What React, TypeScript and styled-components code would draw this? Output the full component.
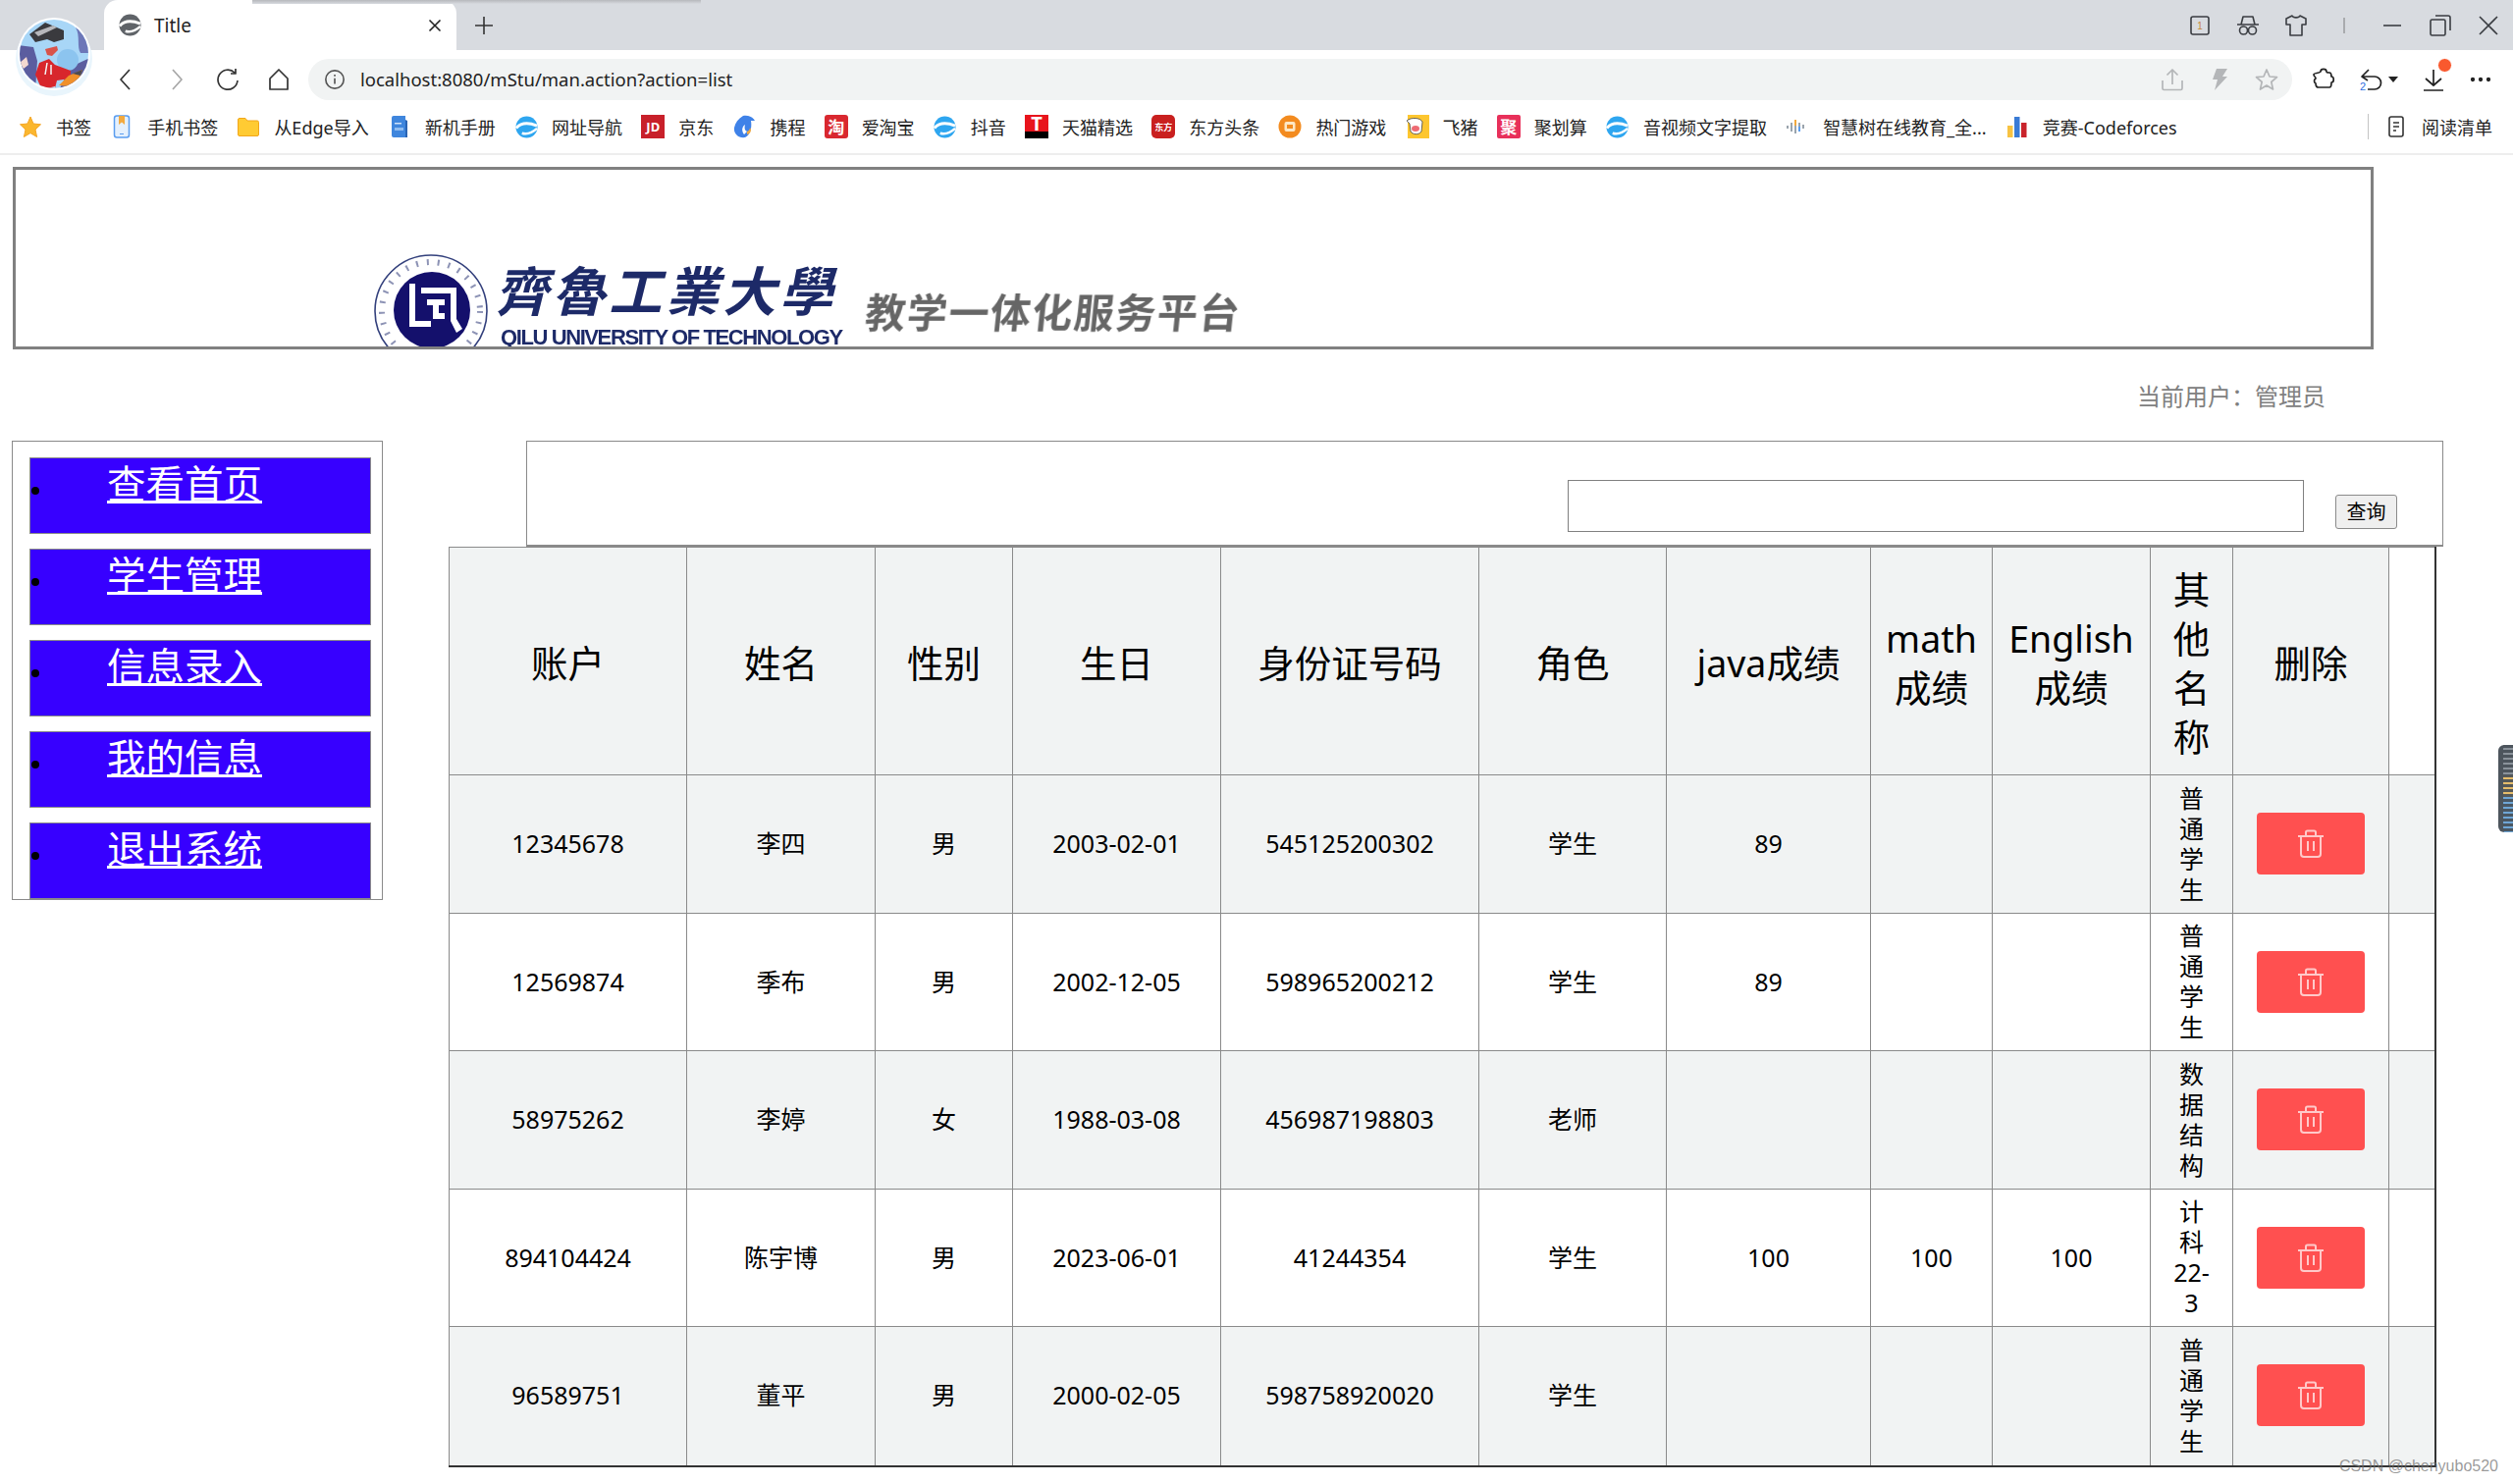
import React from "react";
import styled, { createGlobalStyle } from "styled-components";

const FONT = `"Noto Sans", "Noto Sans CJK SC", sans-serif`;

const GlobalStyle = createGlobalStyle`
    html, body {
        margin: 0;
        padding: 0;
        background: #fff;
    }
    body {
        font-family: ${FONT};
        color: #000;
    }
    * {
        box-sizing: border-box;
    }
`;

function Avatar() {
    return (
        <AvatarSvg viewBox="0 0 100 95">
            <defs>
                <clipPath id="avatarClip">
                    <circle cx="45" cy="45" r="35" />
                </clipPath>
            </defs>
            <ellipse cx="45" cy="50" rx="39" ry="38" fill="#e9f5fc" />
            <circle cx="45" cy="45" r="37" fill="#fff" />
            <g clipPath="url(#avatarClip)">
                <rect x="5" y="5" width="80" height="80" fill="#a8d6f7" />
                <path d="M8 36 L24 38 L28 52 L26 82 L8 82Z" fill="#5b5d9f" />
                <path d="M67 18 C72 26 68 38 72 44 L84 44 L84 20Z" fill="#6d77b8" />
                <path d="M62 58 L84 48 L84 82 L50 82Z" fill="#5b5d9f" />
                <circle cx="59" cy="51" r="11" fill="#8cc4ef" />
                <path d="M20 25 L36 13 L55 21 L55 30 L45 33 L38 30 L26 33Z" fill="#3a3a3e" />
                <path d="M25 23 L44 16 L48 18 L29 27Z" fill="#b7b7bb" />
                <path d="M36 40 L48 37 L49 41 L43 47 L38 46Z" fill="#d9534a" />
                <path d="M30 54 L40 50 L46 56 L62 62 L62 70 L48 72 L46 80 L32 80 L26 66Z" fill="#d8262c" />
                <path d="M38 54 L36 66 M42 56 L42 66" stroke="#f5f5f5" strokeWidth="1.5" fill="none" />
                <path d="M50 77 L60 67 L74 61 L71 70 L60 78Z" fill="#f0902a" />
                <path d="M64 65 L74 61 L72 67Z" fill="#4b4b52" />
                <path d="M38 80 L46 78 L48 85 L36 85Z" fill="#cfe6f7" />
                <path d="M10 54 L17 48 L19 56 L14 60Z" fill="#f4d8d0" />
            </g>
        </AvatarSvg>
    );
}

function TitleBarBar() {
    return (
        <TitleBar>
            <TabShadow />
            <Tab>
                <EdgeMark size={23} color="#5f6368" />
                <TabTitle>Title</TabTitle>
                <TabClose viewBox="0 0 14 14">
                    <path d="M1.5 1.5 L12.5 12.5 M12.5 1.5 L1.5 12.5" />
                </TabClose>
            </Tab>
            <PlusIcon viewBox="0 0 20 20">
                <path d="M10 1 V19 M1 10 H19" />
            </PlusIcon>
            <WindowControls>
                <ChromeIcon viewBox="0 0 24 24">
                    <rect x="3" y="3" width="18" height="18" rx="2" />
                    <text x="12" y="16" textAnchor="middle" fontSize="10" fill="#c98a3a" stroke="none" fontFamily="Liberation Sans">
                        1
                    </text>
                </ChromeIcon>
                <ChromeIcon viewBox="0 0 24 24">
                    <path d="M1 11 H23 M5 11 L7 3 H17 L19 11" />
                    <circle cx="7.5" cy="17" r="4" />
                    <circle cx="16.5" cy="17" r="4" />
                    <path d="M11.5 16.5 H12.5" />
                </ChromeIcon>
                <ChromeIcon viewBox="0 0 24 24">
                    <path d="M8 2 C9 4.5 15 4.5 16 2 L22 5 L22 11 L18 11 L18 22 L6 22 L6 11 L2 11 L2 5Z" />
                </ChromeIcon>
                <WindowSep />
                <ChromeIcon viewBox="0 0 24 24">
                    <path d="M3 12 H21" />
                </ChromeIcon>
                <ChromeIcon viewBox="0 0 24 24">
                    <rect x="2" y="6" width="15" height="16" rx="1.5" />
                    <path d="M7 2 H20 a2 2 0 0 1 2 2 V17" />
                </ChromeIcon>
                <ChromeIcon viewBox="0 0 24 24">
                    <path d="M3 3 L21 21 M21 3 L3 21" />
                </ChromeIcon>
            </WindowControls>
        </TitleBar>
    );
}

function EdgeMark({ size, color }: { size: number; color: string }) {
    return (
        <svg width={size} height={size} viewBox="0 0 24 24">
            <circle cx="12" cy="12" r="11.5" fill={color} />
            <path d="M1 13 C6 7 14 7 23 10.5" stroke="#fff" strokeWidth="3" fill="none" />
            <path d="M7 18.5 C12 20 18 18 23 13.5" stroke="#fff" strokeWidth="2.6" fill="none" />
        </svg>
    );
}

function AddressToolbar() {
    return (
        <Toolbar>
            <NavGroup>
                <NavIcon viewBox="0 0 24 24">
                    <path d="M16 2 L7 12 L16 22" />
                </NavIcon>
                <NavIcon viewBox="0 0 24 24" $muted>
                    <path d="M8 2 L17 12 L8 22" />
                </NavIcon>
                <NavIcon viewBox="0 0 24 24">
                    <path d="M19 5 A10 10 0 1 0 22 13 M20 1 V6 H15" />
                </NavIcon>
                <NavIcon viewBox="0 0 24 24">
                    <path d="M12 2 L21 11 V22 H3 V11Z" />
                </NavIcon>
            </NavGroup>
            <AddressBar>
                <InfoIcon viewBox="0 0 24 24">
                    <circle cx="12" cy="12" r="10" />
                    <path d="M12 10.5 V17 M12 6.5 V8.5" />
                </InfoIcon>
                <Url>localhost:8080/mStu/man.action?action=list</Url>
                <AddressActions>
                    <AddressIcon viewBox="0 0 24 24">
                        <path d="M2 13 V21 a1.5 1.5 0 0 0 1.5 1.5 H20.5 A1.5 1.5 0 0 0 22 21 V13 M12 17 V2 M6.5 7.5 L12 2 L17.5 7.5" />
                    </AddressIcon>
                    <AddressIcon viewBox="0 0 24 24">
                        <path d="M9 1 H20 L15 9 H20 L7 23 L10 12 H5Z" fill="#b4b6b8" stroke="none" />
                    </AddressIcon>
                    <AddressIcon viewBox="0 0 24 24">
                        <path d="M12 2 L15 9 L22.5 9.6 L16.8 14.5 L18.5 22 L12 18 L5.5 22 L7.2 14.5 L1.5 9.6 L9 9Z" />
                    </AddressIcon>
                </AddressActions>
            </AddressBar>
            <ToolActions>
                <ToolIcon viewBox="0 0 24 24">
                    <path d="M9 4 C9 0.5 15 0.5 15 4 C15 5 17 5 18 5 C20 5 20 8 20 9 C23 9 23 15 20 15 C20 17 20 20 18 20 L7 20 C5 20 4 19 4 16 C2 15 2 12 4 11 C4 9 2 9 2 7 C2 5 7 6 9 4Z" />
                </ToolIcon>
                <UndoWrap>
                    <ToolIcon viewBox="0 0 24 24">
                        <path d="M10 2 L3 9 L9 13 M3.5 9 H16 a6 6 0 0 1 0 13 H9" />
                        <text x="1" y="23" fontSize="11" fill="#2f6fe0" stroke="none" fontFamily="Liberation Sans">
                            2
                        </text>
                    </ToolIcon>
                    <Caret />
                </UndoWrap>
                <DownloadWrap>
                    <ToolIcon viewBox="0 0 24 24">
                        <path d="M12 2 V18 M4 11 L12 18 L20 11 M2 23 H22" />
                    </ToolIcon>
                    <RedDot />
                </DownloadWrap>
                <ToolIcon viewBox="0 0 24 24">
                    <circle cx="4" cy="12" r="1.3" fill="#333" />
                    <circle cx="12" cy="12" r="1.3" fill="#333" />
                    <circle cx="20" cy="12" r="1.3" fill="#333" />
                </ToolIcon>
            </ToolActions>
        </Toolbar>
    );
}

// inside a function: the badges below are styled components declared further down
function getBookmarks(): { icon: React.ReactNode; label: string }[] {
    return [
        {
            icon: (
                <svg width="24" height="24" viewBox="0 0 24 24">
                    <path d="M12 2 L15 9 L22.5 9.8 L17 15 L18.6 22.5 L12 18.6 L5.4 22.5 L7 15 L1.5 9.8 L9 9Z" fill="#fbb72e" stroke="#f5a524" strokeLinejoin="round" />
                </svg>
            ),
            label: "书签",
        },
        {
            icon: (
                <svg width="24" height="24" viewBox="0 0 24 24">
                    <rect x="4.5" y="1" width="15" height="22" rx="2.5" fill="#e4f0fd" stroke="#5a9def" strokeWidth="1.5" />
                    <path d="M9 1 H15 V10 L12 7.5 L9 10Z" fill="#f3a93d" />
                    <rect x="10" y="19" width="4" height="1" fill="#5a9def" />
                </svg>
            ),
            label: "手机书签",
        },
        {
            icon: (
                <svg width="24" height="24" viewBox="0 0 24 24">
                    <path d="M1.5 5 a1.5 1.5 0 0 1 1.5 -1.5 H9 L11 6 H21 a1.5 1.5 0 0 1 1.5 1.5 V20 a1.5 1.5 0 0 1 -1.5 1.5 H3 a1.5 1.5 0 0 1 -1.5 -1.5Z" fill="#ffcb33" stroke="#f2a71b" />
                </svg>
            ),
            label: "从Edge导入",
        },
        {
            icon: (
                <svg width="24" height="24" viewBox="0 0 24 24">
                    <path d="M4 3 a2 2 0 0 1 2 -2 H18 V23 H6 a2 2 0 0 1 -2 -2Z" fill="#3f86dd" />
                    <path d="M18 5 L20 6 V23 H18Z" fill="#2a64b4" />
                    <rect x="7" y="8" width="7" height="1.5" fill="#cfe2f9" />
                    <rect x="7" y="13" width="9" height="3" fill="#8fbcf0" />
                </svg>
            ),
            label: "新机手册",
        },
        { icon: <EdgeMark size={23} color="#2ea6f0" />, label: "网址导航" },
        { icon: <Badge $bg="#c8202a" $size={13}>JD</Badge>, label: "京东" },
        {
            icon: (
                <svg width="24" height="24" viewBox="0 0 24 24">
                    <path d="M11 1 C16 0 21 2 23 6 L19 6 C20 12 19 20 13 23 C6 24 1 19 2 13 C3 8 6 4 11 1Z" fill="#3f82e8" />
                    <path d="M12 20 C9 16 10 12 13 10 C12 14 13 16 15 17" fill="#fff" />
                    <path d="M15 17 C17 16 18 15 18 13 L19 15 C19 18 17 20 15 20Z" fill="#f3a93d" />
                </svg>
            ),
            label: "携程",
        },
        { icon: <Badge $bg="#d9282f" $size={17} $radius={3}>淘</Badge>, label: "爱淘宝" },
        { icon: <EdgeMark size={23} color="#2ea6f0" />, label: "抖音" },
        { icon: <Badge $bg="linear-gradient(#e8141c 0 72%, #000 72%)" $size={20} $align="start">T</Badge>, label: "天猫精选" },
        { icon: <Badge $bg="#c9201f" $size={9} $radius={5}>东方</Badge>, label: "东方头条" },
        {
            icon: (
                <svg width="24" height="24" viewBox="0 0 24 24">
                    <circle cx="12" cy="12" r="11.5" fill="#f38b1f" />
                    <rect x="6.5" y="7" width="11" height="10" rx="2" fill="#fde7c4" />
                    <rect x="9" y="10" width="6" height="4" fill="#f38b1f" />
                </svg>
            ),
            label: "热门游戏",
        },
        {
            icon: (
                <svg width="24" height="24" viewBox="0 0 24 24">
                    <rect x="2" y="0" width="22" height="24" fill="#fdc62f" />
                    <path d="M1 6 C6 2 15 3 17 7 L16 17 C13 21 7 20 5 17 L4 9Z" fill="#fff" stroke="#444" strokeWidth="0.8" />
                    <ellipse cx="10" cy="14" rx="4" ry="3" fill="#ee6b73" />
                </svg>
            ),
            label: "飞猪",
        },
        { icon: <Badge $bg="#e8305a" $size={17} $radius={2}>聚</Badge>, label: "聚划算" },
        { icon: <EdgeMark size={23} color="#2ea6f0" />, label: "音视频文字提取" },
        {
            icon: (
                <svg width="24" height="24" viewBox="0 0 24 24">
                    <path d="M2 11 V14 M6 8 V17 M10 5 V19 M14 8 V17 M18 10 V14" strokeWidth="2" fill="none" stroke="#9aa4ad" />
                    <path d="M10 5 V11" stroke="#f3a93d" strokeWidth="2" />
                    <path d="M14 12 V17" stroke="#5a9def" strokeWidth="2" />
                </svg>
            ),
            label: "智慧树在线教育_全...",
        },
        {
            icon: (
                <svg width="24" height="24" viewBox="0 0 24 24">
                    <rect x="2" y="11" width="5.5" height="12" fill="#f7c242" />
                    <rect x="9" y="2" width="5.5" height="21" fill="#3a7bd5" />
                    <rect x="16" y="8" width="5.5" height="15" fill="#c9242b" />
                </svg>
            ),
            label: "竞赛-Codeforces",
        },
    ];
}

function BookmarksBar() {
    return (
        <Bookmarks>
            {getBookmarks().map((b) => (
                <Bookmark key={b.label}>
                    <BookmarkIcon>{b.icon}</BookmarkIcon>
                    {b.label}
                </Bookmark>
            ))}
            <ReadingList>
                <svg width="24" height="24" viewBox="0 0 24 24" fill="none" stroke="#333" strokeWidth="1.6">
                    <rect x="5" y="2" width="14" height="20" rx="2" />
                    <path d="M9 8 H15 M9 12 H15 M9 16 H12" />
                </svg>
                阅读清单
            </ReadingList>
        </Bookmarks>
    );
}

function Seal() {
    return (
        <SealSvg viewBox="0 0 116 116">
            <circle cx="58" cy="58" r="57" fill="#fff" stroke="#33407c" strokeWidth="1.6" />
            <circle cx="58" cy="58" r="50" fill="none" stroke="#8d93b5" strokeWidth="6" strokeDasharray="2 9" />
            <circle cx="59" cy="57" r="39" fill="#14106c" />
            <path
                d="M36 30 H42 V68 H58 V74 H36Z M48 34 H84 V66 L90 76 L84 80 L78 68 V40 H48Z M54 46 H72 V52 H66 V60 H72 V66 H60 V52 H54Z"
                fill="#fff"
            />
        </SealSvg>
    );
}

const menu = ["查看首页", "学生管理", "信息录入", "我的信息", "退出系统"];

const headers = ["账户", "姓名", "性别", "生日", "身份证号码", "角色", "java成绩", "math成绩", "English成绩", "其他名称", "删除"];

const widths = [242, 192, 140, 212, 263, 191, 208, 124, 161, 84, 159, 47];

const rows = [
    { h: 141, cells: ["12345678", "李四", "男", "2003-02-01", "545125200302", "学生", "89", "", "", "普通学生"] },
    { h: 140, cells: ["12569874", "季布", "男", "2002-12-05", "598965200212", "学生", "89", "", "", "普通学生"] },
    { h: 141, cells: ["58975262", "李婷", "女", "1988-03-08", "456987198803", "老师", "", "", "", "数据结构"] },
    { h: 140, cells: ["894104424", "陈宇博", "男", "2023-06-01", "41244354", "学生", "100", "100", "100", "计科22-3"] },
    { h: 142, cells: ["96589751", "董平", "男", "2000-02-05", "598758920020", "学生", "", "", "", "普通学生"] },
];

function TrashIcon() {
    return (
        <svg width="28" height="29" viewBox="0 0 28 29" fill="none" stroke="#ffc9c9" strokeWidth="2">
            <path d="M1 7 H27" />
            <path d="M9 7 V3 a1.5 1.5 0 0 1 1.5 -1.5 H17.5 A1.5 1.5 0 0 1 19 3 V7" />
            <path d="M4 7 V25 a3 3 0 0 0 3 3 H21 a3 3 0 0 0 3 -3 V7" />
            <path d="M11 12 V22 M17 12 V22" />
        </svg>
    );
}

function App() {
    return (
        <Screen>
            <GlobalStyle />
            <TitleBarBar />
            <AddressToolbar />
            <BookmarksBar />
            <Avatar />
            <Page>
                <Banner>
                    <Seal />
                    <UniversityName>
                        <CalligraphyName>齊魯工業大學</CalligraphyName>
                        <EnglishName>QILU UNIVERSITY OF TECHNOLOGY</EnglishName>
                    </UniversityName>
                    <Slogan>教学一体化服务平台</Slogan>
                </Banner>
                <UserRow>当前用户：管理员</UserRow>
                <Main>
                    <Sidebar>
                        {menu.map((m) => (
                            <MenuItem key={m}>
                                <MenuLink href="#">{m}</MenuLink>
                            </MenuItem>
                        ))}
                    </Sidebar>
                    <Content>
                        <SearchPanel>
                            <SearchInput />
                            <SearchButton>查询</SearchButton>
                        </SearchPanel>
                        <Table>
                            <colgroup>
                                {widths.map((w, i) => (
                                    <Col key={i} $w={w} />
                                ))}
                            </colgroup>
                            <thead>
                                <tr>
                                    {headers.map((h) => (
                                        <Th key={h}>{h}</Th>
                                    ))}
                                </tr>
                            </thead>
                            <tbody>
                                {rows.map((r) => (
                                    <Row key={r.cells[0]} $h={r.h}>
                                        {r.cells.map((c, i) => (
                                            <Td key={i} $narrow={i === 9}>
                                                {c}
                                            </Td>
                                        ))}
                                        <Td>
                                            <DeleteButton>
                                                <TrashIcon />
                                            </DeleteButton>
                                        </Td>
                                        <Td />
                                    </Row>
                                ))}
                            </tbody>
                        </Table>
                    </Content>
                </Main>
            </Page>
            <SideHandle />
            <Watermark>CSDN @chenyubo520</Watermark>
        </Screen>
    );
}

const Screen = styled.div`
    position: relative;
    width: 2560px;
    height: 1512px;
    overflow: hidden;
    background: #fff;
`;

const AvatarSvg = styled.svg`
    position: absolute;
    left: 10px;
    top: 10px;
    width: 100px;
    height: 95px;
`;

const TitleBar = styled.div`
    position: relative;
    display: flex;
    align-items: center;
    height: 51px;
    padding-left: 106px;
    background: #d8dbe0;
`;

const TabShadow = styled.div`
    position: absolute;
    left: 257px;
    top: 0;
    width: 457px;
    height: 4px;
    background: linear-gradient(#b6b8bc, #d8dbe0);
`;

const Tab = styled.div`
    display: flex;
    align-items: center;
    align-self: stretch;
    width: 359px;
    padding: 0 15px 0 15px;
    background: #fff;
    border-radius: 14px 14px 0 0;
`;

const TabTitle = styled.span`
    margin-left: 13px;
    font-size: 19px;
    color: #222;
`;

const TabClose = styled.svg`
    width: 14px;
    height: 14px;
    margin-left: auto;
    fill: none;
    stroke: #222;
    stroke-width: 1.6;
`;

const PlusIcon = styled.svg`
    width: 20px;
    height: 20px;
    margin-left: 18px;
    fill: none;
    stroke: #333;
    stroke-width: 1.6;
`;

const WindowControls = styled.div`
    display: flex;
    align-items: center;
    gap: 25px;
    margin-left: auto;
    padding-right: 13px;
`;

const ChromeIcon = styled.svg`
    width: 24px;
    height: 24px;
    fill: none;
    stroke: #3a3d42;
    stroke-width: 1.6;
    stroke-linejoin: round;
`;

const WindowSep = styled.div`
    width: 2px;
    height: 16px;
    margin: 0 11px;
    background: #a9abae;
`;

const Toolbar = styled.div`
    display: flex;
    align-items: center;
    height: 59px;
    padding-left: 116px;
    padding-right: 21px;
`;

const NavGroup = styled.div`
    display: flex;
    align-items: center;
    gap: 28px;
`;

const NavIcon = styled.svg<{ $muted?: boolean }>`
    width: 24px;
    height: 24px;
    fill: none;
    stroke: ${(p) => (p.$muted ? "#a6a6a6" : "#333")};
    stroke-width: 1.7;
    stroke-linejoin: round;
`;

const AddressBar = styled.div`
    display: flex;
    align-items: center;
    flex: 1;
    height: 42px;
    margin-left: 18px;
    padding: 0 14px 0 16px;
    background: #f1f3f3;
    border-radius: 21px;
`;

const InfoIcon = styled.svg`
    width: 22px;
    height: 22px;
    fill: none;
    stroke: #555;
    stroke-width: 1.8;
`;

const Url = styled.span`
    margin-left: 15px;
    font-size: 18.5px;
    color: #222;
`;

const AddressActions = styled.div`
    display: flex;
    align-items: center;
    gap: 24px;
    margin-left: auto;
`;

const AddressIcon = styled.svg`
    width: 24px;
    height: 24px;
    fill: none;
    stroke: #b4b6b8;
    stroke-width: 1.7;
    stroke-linejoin: round;
`;

const ToolActions = styled.div`
    display: flex;
    align-items: center;
    gap: 24px;
    margin-left: 20px;
`;

const ToolIcon = styled.svg`
    width: 24px;
    height: 24px;
    fill: none;
    stroke: #222;
    stroke-width: 1.7;
    stroke-linejoin: round;
`;

const UndoWrap = styled.div`
    display: flex;
    align-items: center;
    gap: 6px;
`;

const Caret = styled.div`
    width: 0;
    height: 0;
    border-left: 5px solid transparent;
    border-right: 5px solid transparent;
    border-top: 6px solid #222;
`;

const DownloadWrap = styled.div`
    position: relative;
    display: flex;
`;

const RedDot = styled.div`
    position: absolute;
    right: -7px;
    top: -10px;
    width: 15px;
    height: 15px;
    border: 1px solid #fff;
    border-radius: 50%;
    background: #f9592e;
`;

const Bookmarks = styled.div`
    display: flex;
    align-items: center;
    gap: 19.2px;
    height: 48px;
    padding: 0 21px 8px 19px;
    border-bottom: 2px solid #eeeeee;
`;

const Bookmark = styled.div`
    display: flex;
    align-items: center;
    gap: 14px;
    font-size: 18px;
    color: #222;
    white-space: nowrap;
`;

const BookmarkIcon = styled.span`
    display: flex;
    align-items: center;
    justify-content: center;
    width: 24px;
    height: 24px;
`;

const Badge = styled.span<{ $bg: string; $size: number; $radius?: number; $align?: string }>`
    display: flex;
    align-items: ${(p) => p.$align || "center"};
    justify-content: center;
    width: 24px;
    height: 24px;
    background: ${(p) => p.$bg};
    border-radius: ${(p) => p.$radius || 0}px;
    color: #fff;
    font-size: ${(p) => p.$size}px;
    font-weight: 700;
    line-height: ${(p) => (p.$align ? "18px" : "1")};
    white-space: nowrap;
`;

const ReadingList = styled.div`
    display: flex;
    align-items: center;
    gap: 14px;
    height: 26px;
    margin-left: auto;
    padding-left: 16px;
    border-left: 1px solid #c4c4c4;
    font-size: 18px;
    color: #222;
`;

const Page = styled.div`
    padding: 12px 0 0 12px;
`;

const Banner = styled.div`
    display: flex;
    align-items: flex-end;
    width: 2405px;
    height: 186px;
    margin-left: 1px;
    padding-left: 365px;
    border: 3px solid #808080;
    overflow: hidden;
`;

const SealSvg = styled.svg`
    flex: none;
    width: 116px;
    height: 116px;
    margin-bottom: -22px;
`;

const UniversityName = styled.div`
    display: flex;
    flex-direction: column;
    margin-left: 13px;
    filter: blur(0.5px);
`;

const CalligraphyName = styled.div`
    margin-bottom: 7px;
    font-family: "Noto Sans CJK TC", sans-serif;
    font-size: 54px;
    font-weight: 700;
    line-height: 68px;
    letter-spacing: 4px;
    color: #1d2a68;
    transform: skewX(-14deg);
`;

const EnglishName = styled.div`
    font-family: "Liberation Sans", sans-serif;
    font-size: 22px;
    font-weight: 700;
    line-height: 18px;
    letter-spacing: -1.4px;
    color: #1d2a68;
    white-space: nowrap;
`;

const Slogan = styled.div`
    margin-left: 24px;
    margin-bottom: 11px;
    font-family: "Noto Sans CJK SC", sans-serif;
    font-size: 41px;
    font-weight: 700;
    line-height: 52px;
    letter-spacing: 1.5px;
    color: #666;
    transform: skewX(-6deg);
    filter: blur(0.6px);
`;

const UserRow = styled.div`
    display: flex;
    align-items: center;
    justify-content: flex-end;
    height: 93px;
    padding-right: 191px;
    font-size: 24px;
    color: #808080;
`;

const Main = styled.div`
    display: flex;
    align-items: flex-start;
    gap: 67px;
`;

const Sidebar = styled.ul`
    display: flex;
    flex-direction: column;
    gap: 15px;
    flex: none;
    width: 378px;
    height: 468px;
    margin: 0;
    padding: 16px 11px 0 17px;
    border: 1px solid #8a8a8a;
    list-style: none;
`;

const MenuItem = styled.li`
    display: flex;
    align-items: flex-start;
    flex: none;
    height: 78px;
    border: 1px solid #8a8a8a;
    background: #3700ff;

    &::before {
        content: "";
        flex: none;
        width: 8px;
        height: 8px;
        margin: 29px 0 0 1px;
        border-radius: 50%;
        background: #000;
    }
`;

const MenuLink = styled.a`
    margin-left: 69px;
    font-size: 39.5px;
    line-height: 52px;
    color: #fff;
    text-decoration: underline;
`;

const Content = styled.div`
    display: flex;
    flex-direction: column;
    width: 2032px;
`;

const SearchPanel = styled.div`
    display: flex;
    align-items: flex-start;
    justify-content: flex-end;
    gap: 32px;
    height: 108px;
    margin-left: 79px;
    padding: 39px 46px 0 0;
    border: 1px solid #8a8a8a;
    border-bottom-width: 2px;
`;

const SearchInput = styled.input`
    width: 750px;
    height: 53px;
    border: 1px solid #808080;
    background: #fff;
    outline: none;
`;

const SearchButton = styled.button`
    width: 63px;
    height: 35px;
    margin-top: 15px;
    padding: 0;
    border: 1px solid #8a8a8a;
    border-radius: 3px;
    background: #efefef;
    font-family: ${FONT};
    font-size: 20px;
    line-height: 1;
    color: #000;
`;

const Table = styled.table`
    width: 2023px;
    table-layout: fixed;
    border-collapse: collapse;
    border-left: 1px solid #8a8a8a;
    border-top: 1px solid #8a8a8a;
    border-right: 2px solid #333;
    border-bottom: 2px solid #333;
`;

const Col = styled.col<{ $w: number }>`
    width: ${(p) => p.$w}px;
`;

const Th = styled.th`
    height: 232px;
    padding: 5px 8px 0;
    border: 1px solid #8a8a8a;
    background: #f1f3f3;
    font-size: 37.5px;
    font-weight: 400;
    line-height: 50px;
    text-align: center;
`;

const Row = styled.tr<{ $h: number }>`
    height: ${(p) => p.$h}px;

    &:nth-child(odd) {
        background: #f1f3f3;
    }
`;

const Td = styled.td<{ $narrow?: boolean }>`
    padding: 0 ${(p) => (p.$narrow ? 20 : 8)}px 1px;
    border: 1px solid #8a8a8a;
    font-size: 25px;
    line-height: 31px;
    text-align: center;
    vertical-align: middle;
`;

const DeleteButton = styled.button`
    display: inline-flex;
    align-items: center;
    justify-content: center;
    width: 110px;
    height: 63px;
    padding: 0;
    border: none;
    border-radius: 4px;
    background: #ff5050;
    vertical-align: middle;
`;

const SideHandle = styled.div`
    position: absolute;
    right: 0;
    top: 759px;
    width: 15px;
    height: 89px;
    border-left: 5px solid #4d555d;
    border-radius: 6px 0 0 6px;
    background: repeating-linear-gradient(rgba(70, 78, 86, 0.9) 0 3px, transparent 3px 5px),
        linear-gradient(#8a929a 0 35%, #e6bd6b 35% 60%, #6fa6d6 60%);
`;

const Watermark = styled.div`
    position: absolute;
    right: 15px;
    top: 1484px;
    font-family: "Liberation Sans", sans-serif;
    font-size: 16px;
    line-height: 20px;
    color: rgba(110, 110, 110, 0.7);
`;

export default App;
